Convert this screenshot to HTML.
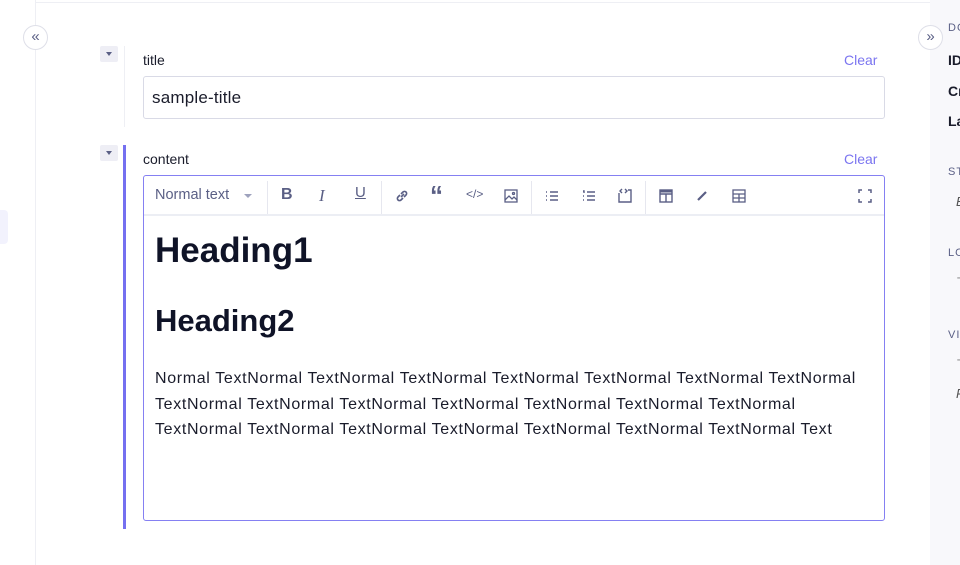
<!DOCTYPE html>
<html><head><meta charset="utf-8"><style>
*{box-sizing:border-box;margin:0;padding:0}
body{width:960px;height:565px;overflow:hidden;background:#fff;font-family:"Liberation Sans",sans-serif;color:#1a1c2b;position:relative}
.abs{position:absolute}
.topline{left:35px;top:2px;width:895px;height:1px;background:#eeeff4}
.vline{left:35px;top:0;width:1px;height:565px;background:#eeeff4}
.right{left:930px;top:0;width:30px;height:565px;background:#f8f8fb}
.circ{width:25px;height:25px;border-radius:50%;border:1px solid #dedfe8;background:#fff;color:#5a5f85;font-size:15px;line-height:22px;text-align:center}
.tog{width:18px;height:16px;background:#eeeef5;border-radius:2px}
.tog:after{content:"";position:absolute;left:6px;top:6px;border-left:3px solid transparent;border-right:3px solid transparent;border-top:4px solid #5a5f85}
.lbl{font-size:14px;color:#1a1c2b}
.clear{font-size:14px;color:#7b75f0}
.inp{left:143px;top:76px;width:742px;height:43px;border:1px solid #d9dae6;border-radius:3px;font-size:17px;padding:11px 8px;letter-spacing:.2px}
.ed{left:143px;top:175px;width:742px;height:346px;border:1px solid #8580f2;border-radius:3px}
.tb{height:40px;border-bottom:2px solid #eceef4;position:relative}
.sep{position:absolute;top:5px;width:1px;height:33px;background:#e6e7ef}
.ic{position:absolute;top:12px;width:16px;height:16px}
.rt{font-size:11px;color:#5a5f85;letter-spacing:1px}
.rb{font-size:14px;color:#1a1c2b;font-weight:bold}
</style></head><body>
<div class="abs topline"></div>
<div class="abs vline"></div>
<div class="abs" style="left:0;top:210px;width:8px;height:34px;background:#f2f2fd;border-radius:0 4px 4px 0"></div>
<div class="abs right"></div>
<div class="abs circ" style="left:23px;top:25px">«</div>
<div class="abs circ" style="left:918px;top:25px">»</div>
<div class="abs rt" style="left:948px;top:22px">DO</div>
<div class="abs rb" style="left:948px;top:52px">ID</div>
<div class="abs rb" style="left:948px;top:83px">Cr</div>
<div class="abs rb" style="left:948px;top:113px">La</div>
<div class="abs rt" style="left:948px;top:166px">ST</div>
<div class="abs" style="left:956px;top:194px;font-size:13px;font-style:italic;color:#555">B</div>
<div class="abs rt" style="left:948px;top:247px">LO</div>
<div class="abs" style="left:957px;top:275px;font-size:12px;color:#777">T</div>
<div class="abs rt" style="left:948px;top:329px">VI</div>
<div class="abs" style="left:957px;top:357px;font-size:12px;color:#777">T</div>
<div class="abs" style="left:956px;top:386px;font-size:13px;font-style:italic;color:#555">P</div>

<div class="abs tog" style="left:100px;top:46px"></div>
<div class="abs" style="left:124px;top:46px;width:1px;height:81px;background:#eeeff4"></div>
<div class="abs lbl" style="left:143px;top:52px">title</div>
<div class="abs clear" style="left:844px;top:52px">Clear</div>
<div class="abs inp">sample-title</div>

<div class="abs tog" style="left:100px;top:145px"></div>
<div class="abs" style="left:123px;top:145px;width:3px;height:384px;background:#7570f0"></div>
<div class="abs lbl" style="left:143px;top:151px">content</div>
<div class="abs clear" style="left:844px;top:151px">Clear</div>
<div class="abs ed">
 <div class="tb">
  <div style="position:absolute;left:11px;top:11px;font-size:14.5px;color:#5a5f85">Normal text</div>
  <div style="position:absolute;left:100px;top:18px;border-left:4px solid transparent;border-right:4px solid transparent;border-top:4px solid #9ea2bd"></div>
  <div class="sep" style="left:123px"></div>
  <div style="position:absolute;left:137px;top:10px;font-size:16px;font-weight:bold;color:#5a5f85">B</div>
  <div style="position:absolute;left:175px;top:10px;font-size:17px;font-style:italic;color:#5a5f85;font-family:'Liberation Serif',serif">I</div>
  <div style="position:absolute;left:211px;top:8px;font-size:15px;color:#5a5f85;text-decoration:underline">U</div>
  <div class="sep" style="left:237px"></div>
  <svg class="ic" style="left:250px" viewBox="0 0 16 16" fill="none" stroke="#5a5f85" stroke-width="1.6"><path d="M7 9l3-3M6 7l-2 2a2 2 0 003 3l2-2M10 9l2-2a2 2 0 00-3-3L7 6"/></svg>
  <div style="position:absolute;left:286px;top:4px;font-size:26px;font-weight:bold;color:#5a5f85">“</div>
  <div style="position:absolute;left:322px;top:11px;font-size:12px;color:#5a5f85">&lt;/&gt;</div>
  <svg class="ic" style="left:359px" viewBox="0 0 16 16" fill="none" stroke="#5a5f85" stroke-width="1.3"><rect x="2" y="2" width="12" height="12"/><path d="M2 12l4-4 3 3 2-2 3 3"/><circle cx="10.5" cy="5.5" r="1"/></svg>
  <div class="sep" style="left:387px"></div>
  <svg class="ic" style="left:400px" viewBox="0 0 16 16" stroke="#5a5f85" stroke-width="1.4"><path d="M6 4h8M6 8h8M6 12h8M2 4h1M2 8h1M2 12h1"/></svg>
  <svg class="ic" style="left:437px" viewBox="0 0 16 16" stroke="#5a5f85" stroke-width="1.4"><path d="M6 4h8M6 8h8M6 12h8M2 3h1v2M2 8h1M2 12h1"/></svg>
  <svg class="ic" style="left:473px" viewBox="0 0 16 16" fill="none" stroke="#5a5f85" stroke-width="1.4"><path d="M2 5v9h12V2h-3M5 1l-2 2 2 2M8 1l2 2-2 2"/></svg>
  <div class="sep" style="left:501px"></div>
  <svg class="ic" style="left:514px" viewBox="0 0 16 16" fill="none" stroke="#5a5f85" stroke-width="1.4"><rect x="2" y="2" width="12" height="12"/><path d="M2 6h12M8 6v8" /><path d="M2 3h12" stroke-width="3"/></svg>
  <svg class="ic" style="left:550px" viewBox="0 0 16 16" stroke="#5a5f85" stroke-width="2.2"><path d="M4 12l8-8"/></svg>
  <svg class="ic" style="left:587px" viewBox="0 0 16 16" fill="none" stroke="#5a5f85" stroke-width="1.3"><rect x="2" y="2" width="12" height="12"/><path d="M2 6h12M2 10h12M8 6v8"/></svg>
  <svg class="ic" style="left:713px" viewBox="0 0 16 16" fill="none" stroke="#5a5f85" stroke-width="1.5"><path d="M2 5V2h3M11 2h3v3M14 11v3h-3M5 14H2v-3"/></svg>
 </div>
 <div style="position:absolute;left:11px;top:55px;font-size:35px;font-weight:bold;color:#0f1327">Heading1</div>
 <div style="position:absolute;left:11px;top:127px;font-size:31px;font-weight:bold;color:#0f1327">Heading2</div>
 <div style="position:absolute;left:11px;top:190px;font-size:16px;line-height:25.5px;color:#1a1c2b;letter-spacing:.65px;white-space:nowrap">Normal TextNormal TextNormal TextNormal TextNormal TextNormal TextNormal TextNormal<br>TextNormal TextNormal TextNormal TextNormal TextNormal TextNormal TextNormal<br>TextNormal TextNormal TextNormal TextNormal TextNormal TextNormal TextNormal Text</div>
</div>
</body></html>
